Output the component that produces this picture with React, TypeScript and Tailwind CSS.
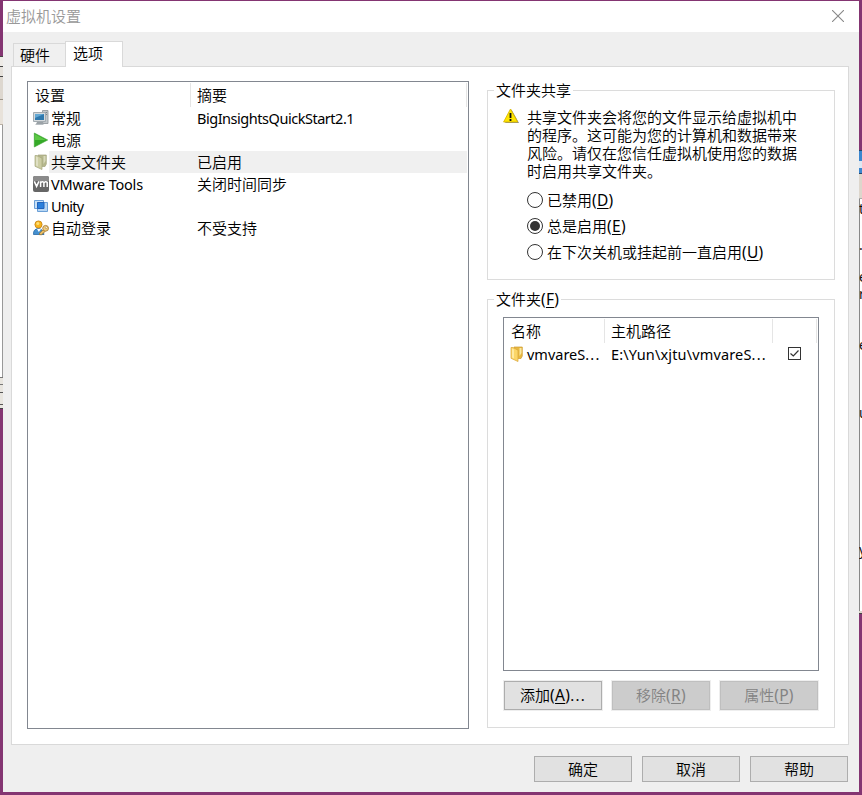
import type { ReactNode } from "react";
import clsx from "clsx";

function ComputerIcon() {
  return (
    <svg width="16" height="16" viewBox="0 0 16 16">
      <path d="M9.5 0.5h5.5v13h-5.5z" fill="#c3c8cb" stroke="#8b9297" strokeWidth="0.8" />
      <path d="M11 2.5h3M11 4.5h3" stroke="#6d757b" strokeWidth="0.8" />
      <path d="M0.5 2.5h12v9h-12z" fill="#d5dadd" stroke="#a3abb0" />
      <path d="M2 4h9v6H2z" fill="#2f79ad" />
      <path d="M2 4h9L2 8z" fill="#63a8d4" />
      <path d="M4 12h6l1 2H3z" fill="#9ba2a7" />
      <path d="M2.5 14h8v1h-8z" fill="#b9bfc3" />
    </svg>
  );
}

function PlayIcon() {
  return (
    <svg width="16" height="16" viewBox="0 0 16 16">
      <path d="M1.3 1L14.7 8L1.3 15z" fill="#35aa28" stroke="#35a52a" strokeWidth="0.6" strokeLinejoin="round" />
      <path d="M2 2.2L12.8 8H2z" fill="#5cc845" />
    </svg>
  );
}

function FolderIcon({ muted }: { muted?: boolean }) {
  return (
    <svg width="16" height="16" viewBox="0 0 16 16">
      <path
        d="M5 1h8.3v9l-1.3 2.5h-4z"
        fill={muted ? "#b5b78c" : "#e8b940"}
        stroke={muted ? "#a3a57e" : "#cf9c30"}
        strokeWidth="0.7"
      />
      <path d="M10.5 2h2v5l-2 3z" fill={muted ? "#d8d9bb" : "#fae8a4"} />
      <path
        d="M2 1.5h2l5 2.7v11.3L2 12.3z"
        fill={muted ? "#cccda4" : "#fbd668"}
        stroke={muted ? "#a4a67c" : "#d9a436"}
        strokeWidth="0.7"
      />
      <path d="M3 2.6l2 1v8.8l-2-1z" fill={muted ? "#dfe0c4" : "#ffeaa0"} />
    </svg>
  );
}

function VmIcon() {
  return (
    <svg width="16" height="16" viewBox="0 0 16 16">
      <rect width="16" height="16" rx="2" fill="#666" />
      <path d="M0 2a2 2 0 012-2h12a2 2 0 012 2v3H0z" fill="#8b8b8b" />
      <path
        d="M1.3 5.4L3.6 10.4L5.9 5.4M7.6 11V5.2M7.6 7Q9.2 5 10.9 6.4V11M10.9 7Q12.6 5 14.2 6.4V11"
        fill="none"
        stroke="#fff"
        strokeWidth="1.5"
      />
    </svg>
  );
}

function UnityIcon() {
  return (
    <svg width="16" height="16" viewBox="0 0 16 16">
      <path d="M1.5 2.5h9v8h-9z" fill="#c8e0f6" stroke="#6b9fd6" />
      <path d="M4.5 4.5h10v9h-10z" fill="#b7d6f3" stroke="#6b9fd6" />
      <path d="M4.5 4.5h6.5v6h-6.5z" fill="#2b80dc" stroke="#2263bb" />
    </svg>
  );
}

function UserIcon() {
  return (
    <svg width="16" height="16" viewBox="0 0 16 16">
      <path d="M0.5 14.5Q0 9 5.5 8.5Q10 9 11 14.5z" fill="#4490d0" stroke="#2868a4" strokeWidth="0.8" />
      <path d="M4 9l1.8 3L8 9z" fill="#fff" />
      <circle cx="5.5" cy="4.5" r="3.6" fill="#f7b51d" stroke="#c47d0d" strokeWidth="0.8" />
      <circle cx="4.8" cy="3.4" r="1.5" fill="#ffdf76" />
      <path d="M10.5 9.5L6.5 13.2v1.5h2l4-3.5" fill="#e8bf67" stroke="#9a6b22" strokeWidth="0.7" />
      <circle cx="12.6" cy="8.3" r="2.9" fill="#f0cd80" stroke="#a27328" strokeWidth="0.8" />
      <circle cx="13.3" cy="7.6" r="1" fill="#fff" stroke="#a27328" strokeWidth="0.5" />
    </svg>
  );
}

function WarningIcon() {
  return (
    <svg width="16" height="16" viewBox="0 0 16 16">
      <path d="M8.5 1.5L16 15H2z" fill="#8a8a8a" />
      <path d="M7.5 1L14.7 14H0.6z" fill="#ffe600" stroke="#d9b800" strokeWidth="0.9" strokeLinejoin="round" />
      <path d="M7.5 5v5M7.5 11v2" stroke="#111" strokeWidth="1.8" />
    </svg>
  );
}

function En({ className, children }: { className?: string; children: ReactNode }) {
  return <span className={clsx("text-[14.5px] font-normal", className)}>{children}</span>;
}

// Mnemonic letter after a label
function Key({ k }: { k: string }) {
  return (
    <span className="text-[15.5px] leading-none font-normal tracking-[0.3px]">
      (<span className="underline underline-offset-2">{k}</span>)
    </span>
  );
}

const settings = [
  { icon: <ComputerIcon />, name: "常规", summary: <En className="tracking-[-0.47px]">BigInsightsQuickStart2.1</En> },
  { icon: <PlayIcon />, name: "电源", summary: "" },
  { icon: <FolderIcon muted />, name: "共享文件夹", summary: "已启用", selected: true },
  { icon: <VmIcon />, name: <En className="tracking-[-0.2px]">VMware Tools</En>, summary: "关闭时间同步" },
  { icon: <UnityIcon />, name: <En className="tracking-[-0.7px]">Unity</En>, summary: "" },
  { icon: <UserIcon />, name: "自动登录", summary: "不受支持" },
];

const options = [
  { label: "已禁用", k: "D" },
  { label: "总是启用", k: "E", checked: true },
  { label: "在下次关机或挂起前一直启用", k: "U" },
];

function Group({ title, className, children }: { title: ReactNode; className: string; children: ReactNode }) {
  return (
    <section className={clsx("relative border border-[#dcdcdc]", className)}>
      <h2 className="absolute -top-[12px] left-[6px] bg-white px-[2px] leading-[22px] font-[350]">{title}</h2>
      {children}
    </section>
  );
}

function Button({ disabled, className, children }: { disabled?: boolean; className: string; children: ReactNode }) {
  return (
    <button
      disabled={disabled}
      className={clsx(
        "flex w-[98px] items-center justify-center border",
        disabled ? "border-[#bfbfbf] bg-[#cccccc] text-[#838383]" : "border-[#adadad] bg-[#e1e1e1]",
        className
      )}
    >
      {children}
    </button>
  );
}

function LeftEdge() {
  return (
    <div className="flex w-[3px] flex-col overflow-hidden bg-[#843572]">
      <div className="mt-14 h-[11px] border-y border-[#444] bg-[#eeebe7]" />
      <div className="h-[10px] border-b border-[#444] bg-[#e6e2dc]" />
      <div className="h-[23px] border-b border-[#9b9388] bg-[#ddd7cf]" />
      <div className="h-[25px] border-b border-[#b9b0a4] bg-[#e8e2da]" />
      <div className="h-[252px] border-r border-[#999] bg-white" />
      <div className="h-[8px] border-y border-[#777] bg-[#e8e5df]" />
      <div className="h-[8px] border-b border-[#555] bg-[#e8e5df]" />
      <div className="h-[12px] border-b border-[#555] bg-[#e8e5df]" />
      <div className="h-[4px] border-b border-[#444] bg-[#e8e5df]" />
    </div>
  );
}

function RightEdge() {
  return (
    <div className="flex w-[3px] flex-col overflow-hidden bg-[#843572] text-[14px] leading-4 font-normal text-[#111]">
      <div className="mt-[150px] h-[24px] border-y border-[#24466b] bg-[#3b86cf] pt-[10px]">
        <div className="h-[7px] bg-[#dfe8f2]" />
      </div>
      <div className="h-[25px] border-b border-[#aaa] bg-[#ddd6cc]" />
      <div className="flex h-[412px] flex-col border-l border-[#888] bg-white pt-[2px] *:-ml-px">
        <span className="h-[36px]">t</span>
        <span className="h-[32px]">.</span>
        <span className="h-[17px]">e</span>
        <span className="h-[51px]">r</span>
        <span className="h-[68px]">e</span>
        <span className="h-[137px]">u</span>
        <span>y</span>
      </div>
      <div className="h-[3px] border-b border-[#444] bg-[#ddd6cc]" />
    </div>
  );
}

export default function App() {
  return (
    <div className="flex h-[795px] w-[862px] overflow-hidden whitespace-nowrap bg-[#843572] font-['Noto_Sans','Noto_Sans_CJK_SC',sans-serif] text-[15px] leading-[22px] font-[350] text-black">
      <LeftEdge />

      <main className="mt-px mb-[3px] flex w-[856px] flex-col bg-[#efefef]">
        {/* Title bar */}
        <header className="flex h-[31px] items-center justify-between bg-white pr-[15px] pl-[3px] text-[#999]">
          <h1 className="pb-[2px] font-[350]">虚拟机设置</h1>
          <svg width="12" height="12" viewBox="0 0 12 12" className="mb-px">
            <path d="M0 0L12 12M12 0L0 12" stroke="#888" strokeWidth="1.1" />
          </svg>
        </header>

        {/* Tabs */}
        <nav className="flex h-[35px] items-end pl-[10px]">
          <div className="mb-px h-[23px] w-[52px] border border-r-0 border-b-0 border-[#d9d9d9] bg-[#f0f0f0] pl-[6px]">硬件</div>
          <div className="z-10 h-[26px] w-[58px] border border-b-0 border-[#d9d9d9] bg-white pl-[7px]">选项</div>
        </nav>

        <div className="-mt-px ml-[8px] flex h-[679px] w-[838px] shrink-0 border border-[#d9d9d9] bg-white pt-[14px] pl-[15px]">
          {/* Settings list */}
          <div className="h-[648px] w-[442px] shrink-0 border border-[#828790] pr-px">
            <div className="flex h-[25px] pt-px">
              <div className="w-[163px] border-r border-[#e5e5e5] pl-[7px] leading-[24px]">设置</div>
              <div className="flex-1 border-r border-[#e5e5e5] pl-[6px] leading-[24px]">摘要</div>
            </div>
            {settings.map((s, i) => (
              <div key={i} className="flex h-[22px] items-center pl-[5px]">
                {s.icon}
                <div className={clsx("flex h-[22px] flex-1 pl-[2px]", s.selected && "bg-[#f0f0f0]")}>
                  <span className="w-[146px]">{s.name}</span>
                  <span>{s.summary}</span>
                </div>
              </div>
            ))}
          </div>

          <div className="ml-[18px] pt-[9px]">
            {/* Sharing */}
            <Group title="文件夹共享" className="h-[190px] w-[348px]">
              <div className="flex gap-[8px] pt-[17px] pl-[15px]">
                <WarningIcon />
                <p className="leading-[18px]">
                  共享文件夹会将您的文件显示给虚拟机中
                  <br />
                  的程序。这可能为您的计算机和数据带来
                  <br />
                  风险。请仅在您信任虚拟机使用您的数据
                  <br />
                  时启用共享文件夹。
                </p>
              </div>
              <div className="mt-[7px] pl-[39px]">
                {options.map((o) => (
                  <label key={o.k} className="flex h-[26px] items-center gap-[4px]">
                    <span className="flex size-4 items-center justify-center rounded-full border border-[#333] bg-white">
                      {o.checked && <span className="size-[10px] rounded-full bg-[#333]" />}
                    </span>
                    <span className="pb-px">
                      {o.label}
                      <Key k={o.k} />
                    </span>
                  </label>
                ))}
              </div>
            </Group>

            {/* Folders */}
            <Group title={<>文件夹<Key k="F" /></>} className="mt-[19px] h-[429px] w-[348px] pt-[17px] pl-[15px]">
              <div className="h-[354px] w-[316px] border border-[#828790] pr-px">
                <div className="flex h-[25px] pt-px leading-[25px]">
                  <div className="w-[101px] border-r border-[#e5e5e5] pl-[7px]">名称</div>
                  <div className="w-[168px] border-r border-[#e5e5e5] pl-[6px]">主机路径</div>
                  <div className="flex-1 border-r border-[#e5e5e5]" />
                </div>
                <div className="flex h-[22px] items-center pl-[5px]">
                  <FolderIcon />
                  <span className="w-[86px] pl-[2px]">
                    <En>vmvareS<span className="tracking-[1.2px]">...</span></En>
                  </span>
                  <span className="w-[177px]">
                    <En className="tracking-[0.15px]">E:\Yun\xjtu\vmvareS<span className="tracking-[1.2px]">...</span></En>
                  </span>
                  <span className="mb-[2px] flex size-[13px] border border-[#333]">
                    <svg width="11" height="11" viewBox="0 0 11 11">
                      <path d="M1.5 5.5L4.3 8L9.5 2.5" fill="none" stroke="#333" strokeWidth="1.2" />
                    </svg>
                  </span>
                </div>
              </div>
              <div className="mt-[10px] ml-px flex gap-[10px]">
                <Button className="h-[29px] pb-[2px] outline outline-[#eeeeee]">
                  <span>添加<Key k="A" /><span className="font-normal tracking-[1.2px]">...</span></span>
                </Button>
                <Button disabled className="h-[29px] pb-[2px] outline outline-[#eeeeee]"><span>移除<Key k="R" /></span></Button>
                <Button disabled className="h-[29px] pb-[2px] outline outline-[#eeeeee]"><span>属性<Key k="P" /></span></Button>
              </div>
            </Group>
          </div>
        </div>

        {/* Footer */}
        <footer className="mt-[11px] flex justify-end gap-[10px] pr-[11px]">
          <Button className="h-[26px]">确定</Button>
          <Button className="h-[26px]">取消</Button>
          <Button className="h-[26px]">帮助</Button>
        </footer>
      </main>

      <RightEdge />
    </div>
  );
}
